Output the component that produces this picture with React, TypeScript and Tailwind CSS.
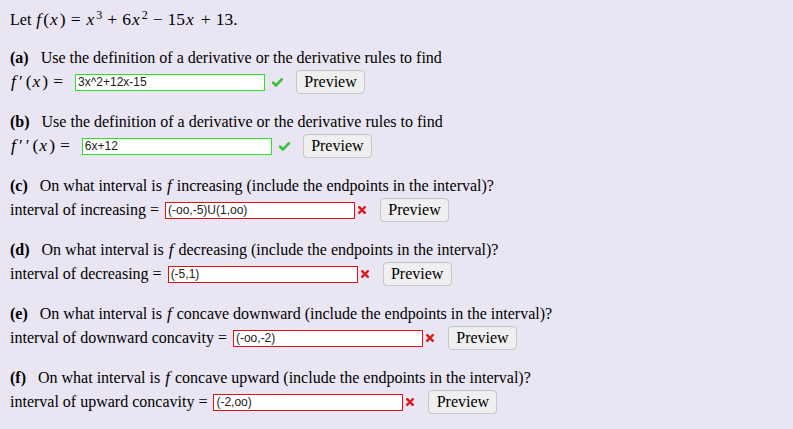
import type { ReactNode } from 'react'

const serif = { fontFamily: '"Liberation Serif", "Times New Roman", serif' }

function Check() {
  return (
    <svg width="11" height="9" viewBox="0 0 11 9" className="ml-[7px] shrink-0">
      <path d="M1.2 4.8 L4 7.4 L9.8 1.4" stroke="#3fbf3f" strokeWidth="2.8" fill="none" strokeLinecap="round" strokeLinejoin="round" />
    </svg>
  )
}

function Cross() {
  return (
    <svg width="8" height="8" viewBox="0 0 8 8" className="ml-[3px] shrink-0">
      <path d="M1.2 1.2 L6.8 6.8 M6.8 1.2 L1.2 6.8" stroke="#d81e1e" strokeWidth="2.4" strokeLinecap="square" />
    </svg>
  )
}

function Preview({ gap }: { gap: string }) {
  return (
    <button
      className={`${gap} h-[24px] w-[69px] rounded-[4px] border border-[#c6c6c6] bg-[#efefef] text-[16px] leading-none text-black`}
      style={serif}
    >
      Preview
    </button>
  )
}

function Answer({ value, ok }: { value: string; ok: boolean }) {
  return (
    <>
      <div
        className={`ml-[6px] flex h-[17px] w-[190px] shrink-0 items-center border bg-white px-[2px] text-[12px] text-[#222] ${
          ok ? 'border-[#22e622]' : 'border-[#e01010]'
        }`}
        style={{ fontFamily: '"Liberation Sans", Arial, sans-serif' }}
      >
        {value}
      </div>
      {ok ? <Check /> : <Cross />}
      <Preview gap={ok ? 'ml-[13px]' : 'ml-[14px]'} />
    </>
  )
}

// math pieces, spaced roughly like MathJax output
const V = ({ children }: { children: ReactNode }) => (
  <i className="pl-[1px] pr-[2px]">{children}</i>
)
const F = () => <i className="pl-[1px] pr-[2px]">f</i>
const Op = ({ children }: { children: ReactNode }) => <span className="mx-[5px]">{children}</span>
const Sup = ({ children }: { children: ReactNode }) => (
  <sup className="text-[12px] leading-none">{children}</sup>
)
const Math = ({ children }: { children: ReactNode }) => (
  <span className="text-[17.5px] leading-none">{children}</span>
)
const Fi = () => <i className="mx-[1px] text-[17px]">f</i>

function Part({
  tag,
  question,
  label,
  value,
  ok,
}: {
  tag: string
  question: ReactNode
  label: ReactNode
  value: string
  ok: boolean
}) {
  return (
    <div className="mt-[16px]">
      <div className="h-[20px] whitespace-nowrap leading-[20px]">
        <b>({tag})</b>
        <span className="ml-[12px]">{question}</span>
      </div>
      <div className="flex h-[28px] items-center whitespace-nowrap">
        <span>{label}</span>
        <Answer value={value} ok={ok} />
      </div>
    </div>
  )
}

export default function App() {
  return (
    <div className="min-h-[429px] w-[793px] bg-[#e9e5f2] px-[10px] pt-[10px] text-[16px] text-black" style={serif}>
      <div className="h-[20px] whitespace-nowrap leading-[20px]">
        Let{' '}
        <Math>
          <F />(<V>x</V>)<Op>=</Op>
          <V>x</V>
          <Sup>3</Sup>
          <Op>+</Op>6<V>x</V>
          <Sup>2</Sup>
          <Op>−</Op>15<V>x</V>
          <Op>+</Op>13.
        </Math>
      </div>
      <div className="h-[2px]" />
      <Part
        tag="a"
        question="Use the definition of a derivative or the derivative rules to find"
        label={
          <Math>
            <F />
            <span className="ml-[1px] mr-[3px]">′</span>(<V>x</V>)<span className="ml-[5px] mr-[6px]">=</span>
          </Math>
        }
        value="3x^2+12x-15"
        ok
      />
      <Part
        tag="b"
        question="Use the definition of a derivative or the derivative rules to find"
        label={
          <Math>
            <F />
            <span className="ml-[1px] mr-[3px]">′</span>
            <span className="mr-[3px]">′</span>(<V>x</V>)<span className="ml-[5px] mr-[6px]">=</span>
          </Math>
        }
        value="6x+12"
        ok
      />
      <Part
        tag="c"
        question={
          <>
            On what interval is <Fi /> increasing (include the endpoints in the interval)?
          </>
        }
        label="interval of increasing ="
        value="(-oo,-5)U(1,oo)"
        ok={false}
      />
      <Part
        tag="d"
        question={
          <>
            On what interval is <Fi /> decreasing (include the endpoints in the interval)?
          </>
        }
        label="interval of decreasing ="
        value="(-5,1)"
        ok={false}
      />
      <Part
        tag="e"
        question={
          <>
            On what interval is <Fi /> concave downward (include the endpoints in the interval)?
          </>
        }
        label="interval of downward concavity ="
        value="(-oo,-2)"
        ok={false}
      />
      <Part
        tag="f"
        question={
          <>
            On what interval is <Fi /> concave upward (include the endpoints in the interval)?
          </>
        }
        label="interval of upward concavity ="
        value="(-2,oo)"
        ok={false}
      />
    </div>
  )
}
